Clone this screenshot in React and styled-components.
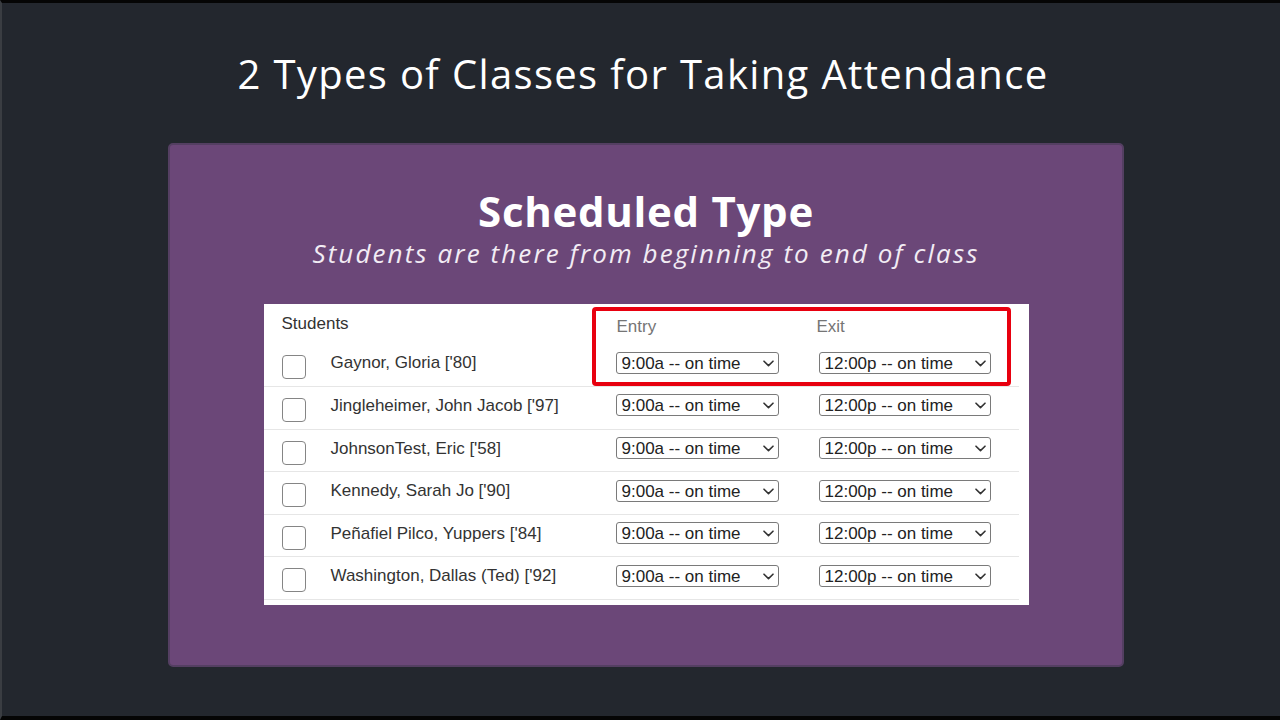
import React from 'react';
import styled, { createGlobalStyle } from 'styled-components';

const Global = createGlobalStyle`
  html, body { margin: 0; padding: 0; background: #23272e; }
  * { box-sizing: border-box; }
`;

const Frame = styled.div`
  width: 1280px;
  height: 720px;
  background: #23272e;
  border-top: 3px solid #050505;
  border-bottom: 4px solid #050505;
  border-left: 2px solid #3a3d42;
  display: flex;
  flex-direction: column;
  overflow: hidden;
`;

const Title = styled.h1`
  margin: 47px 0 0 0;
  padding-left: 4px;
  text-align: center;
  font-family: "Open Sans", "DejaVu Sans", sans-serif;
  font-weight: 400;
  font-size: 40px;
  letter-spacing: 1.35px;
  line-height: 48px;
  color: #ffffff;
`;

const Card = styled.section`
  margin: 45px 0 0 166px;
  width: 956px;
  height: 524px;
  background: #6b4778;
  border: 2px solid #543f62;
  border-radius: 5px;
  display: flex;
  flex-direction: column;
  align-items: center;
`;

const Heading = styled.h2`
  margin: 41px 0 0 0;
  font-family: "Open Sans", "DejaVu Sans", sans-serif;
  font-weight: 700;
  font-size: 42px;
  letter-spacing: 0.7px;
  line-height: 50px;
  color: #ffffff;
`;

const Subtitle = styled.p`
  margin: 1px 0 0 0;
  font-family: "Open Sans", "DejaVu Sans", sans-serif;
  font-style: italic;
  font-weight: 400;
  font-size: 26px;
  letter-spacing: 2.1px;
  line-height: 32px;
  color: #f2ecf4;
`;

const Panel = styled.div`
  position: relative;
  margin-top: 35px;
  width: 765px;
  height: 301px;
  background: #ffffff;
  padding-bottom: 5px;
  font-family: "Liberation Sans", Arial, sans-serif;
  font-size: 17px;
  color: #333333;
`;

const Grid = styled.div`
  display: grid;
  grid-template-columns: 49px 285px 203px 172px;
  margin-right: 10px;
  padding-left: 18px;
  align-items: start;
`;

const Header = styled(Grid)`
  height: 40.4px;
`;

const HeadCell = styled.div`
  grid-column: ${p => p.$span || 'auto'};
  margin-top: ${p => p.$top}px;
  margin-left: ${p => p.$shift || 0}px;
  line-height: 20px;
  color: ${p => p.$muted ? '#757575' : '#333333'};
`;

const Row = styled(Grid)`
  height: 42.6px;
  border-bottom: 1px solid #e6e6e6;
`;

const Check = styled.input.attrs({ type: 'checkbox' })`
  appearance: none;
  -webkit-appearance: none;
  margin: 11px 0 0 0;
  width: 24px;
  height: 24px;
  border: 1px solid #858585;
  border-radius: 4px;
  background: #ffffff;
`;

const Name = styled.div`
  margin-top: 9px;
  line-height: 20px;
  color: #333333;
  white-space: nowrap;
`;

const SelectWrap = styled.div`
  position: relative;
  margin-top: 7.5px;
  width: ${p => p.$w}px;
  height: 22px;
`;

const Select = styled.select`
  appearance: none;
  -webkit-appearance: none;
  display: block;
  width: 100%;
  height: 22px;
  margin: 0;
  padding: 1px 0 0 5px;
  font-family: "Liberation Sans", Arial, sans-serif;
  font-size: 17px;
  line-height: 20px;
  color: #222222;
  background-color: #ffffff;
  border: 1px solid #7a7a7a;
  border-radius: 3px;
`;

const Chevron = styled.svg`
  position: absolute;
  right: 5px;
  top: 8px;
  width: 11px;
  height: 7px;
  pointer-events: none;
`;

const Highlight = styled.div`
  position: absolute;
  left: 328px;
  top: 3px;
  width: 419px;
  height: 79px;
  border: 4px solid #e8000f;
  border-radius: 4px;
  pointer-events: none;
`;

const students = [
  "Gaynor, Gloria ['80]",
  "Jingleheimer, John Jacob ['97]",
  "JohnsonTest, Eric ['58]",
  "Kennedy, Sarah Jo ['90]",
  "Peñafiel Pilco, Yuppers ['84]",
  "Washington, Dallas (Ted) ['92]",
];

function TimeSelect({ w, options }) {
  return (
    <SelectWrap $w={w}>
      <Select defaultValue={options[0]}>
        {options.map(o => <option key={o} value={o}>{o}</option>)}
      </Select>
      <Chevron viewBox="0 0 11 7">
        <path d="M1 1.2 L5.5 5.6 L10 1.2" fill="none" stroke="#333" strokeWidth="1.6" strokeLinecap="round" strokeLinejoin="round" />
      </Chevron>
    </SelectWrap>
  );
}

export default function App() {
  return (
    <>
      <Global />
      <Frame>
        <Title>2 Types of Classes for Taking Attendance</Title>
        <Card>
          <Heading>Scheduled Type</Heading>
          <Subtitle>Students are there from beginning to end of class</Subtitle>
          <Panel>
            <Header>
              <HeadCell $span="1 / 3" $top={10}>Students</HeadCell>
              <HeadCell $top={13} $shift={1} $muted>Entry</HeadCell>
              <HeadCell $top={13} $shift={-2} $muted>Exit</HeadCell>
            </Header>
            {students.map(s => (
              <Row key={s}>
                <Check />
                <Name>{s}</Name>
                <TimeSelect w={163} options={['9:00a -- on time', '9:00a -- late']} />
                <TimeSelect w={172} options={['12:00p -- on time', '12:00p -- early']} />
              </Row>
            ))}
            <Highlight />
          </Panel>
        </Card>
      </Frame>
    </>
  );
}
